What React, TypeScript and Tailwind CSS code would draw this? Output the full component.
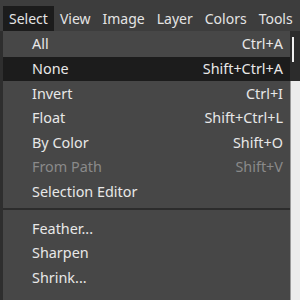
import React from "react";

type Item = { label: string; shortcut?: string; disabled?: boolean; active?: boolean };

const top: Item[] = [
  { label: "All", shortcut: "Ctrl+A" },
  { label: "None", shortcut: "Shift+Ctrl+A", active: true },
  { label: "Invert", shortcut: "Ctrl+I" },
  { label: "Float", shortcut: "Shift+Ctrl+L" },
  { label: "By Color", shortcut: "Shift+O" },
  { label: "From Path", shortcut: "Shift+V", disabled: true },
  { label: "Selection Editor" },
];

const bottom: Item[] = [{ label: "Feather..." }, { label: "Sharpen" }, { label: "Shrink..." }];

function Row({ item }: { item: Item }) {
  return (
    <div
      className={
        "flex h-[24.6px] items-center justify-between pl-[29px] pr-[7px] " +
        (item.active ? "bg-[#1c1c1c] " : "") +
        (item.disabled ? "text-[#8a8a8a]" : "text-[#e8e8e8]")
      }
    >
      <span>{item.label}</span>
      {item.shortcut && <span>{item.shortcut}</span>}
    </div>
  );
}

export default function App() {
  const menus = ["Select", "View", "Image", "Layer", "Colors", "Tools"];
  return (
    <div
      className="flex h-[300px] w-[300px] flex-col overflow-hidden bg-[#3c3c3c] text-[14.4px]"
      style={{ fontFamily: '"Noto Sans", "Open Sans", sans-serif' }}
    >
      <div className="flex h-[31px] shrink-0 items-end bg-[#3d3d3d] pl-[3px]">
        {menus.map((m, i) => (
          <div
            key={m}
            className={
              "flex h-[25px] items-center px-[6px] text-[14px] text-[#e4e4e4] " + (i === 0 ? "bg-[#1c1c1c]" : "")
            }
          >
            {m}
          </div>
        ))}
      </div>
      <div className="flex flex-1">
        <div className="w-[3px] bg-[#2e2e2e]" />
        <div className="flex w-[287px] flex-col bg-[#474747] pt-[1px]">
          {top.map((it) => (
            <Row key={it.label} item={it} />
          ))}
          <div className="flex h-[12px] items-center">
            <div className="mt-[-2px] h-[2px] w-full bg-[#2c2c2c]" />
          </div>
          {bottom.map((it) => (
            <Row key={it.label} item={it} />
          ))}
        </div>
        <div className="flex w-[10px] flex-col">
          <div className="flex h-[50px] bg-[#2c2c2c]">
            <div className="ml-[2px] mt-[6px] h-[25px] w-[2px] bg-[#f0f0f0]" />
          </div>
          <div className="flex-1 bg-[#ececec] border-l border-[#9a9a9a]" />
        </div>
      </div>
    </div>
  );
}
